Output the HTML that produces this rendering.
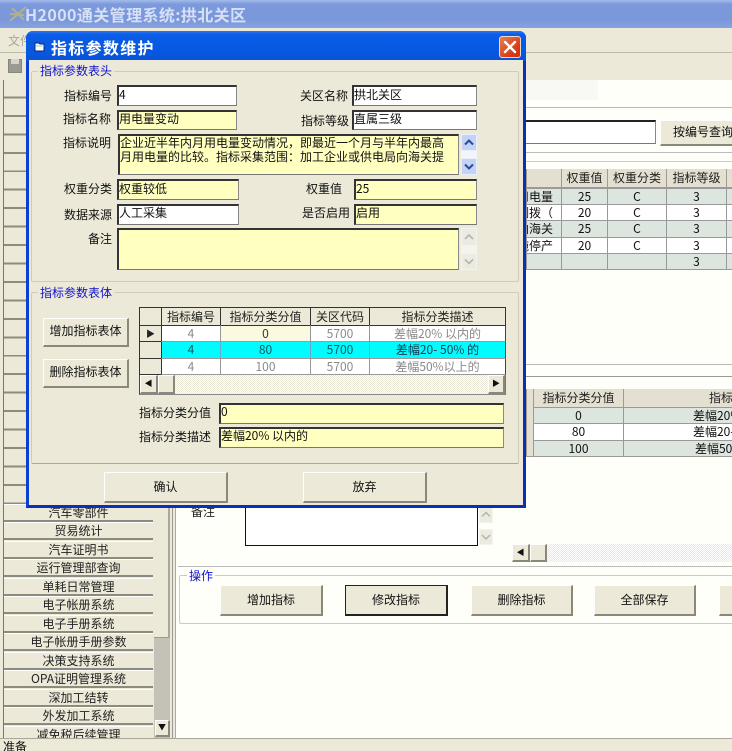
<!DOCTYPE html>
<html lang="zh"><head><meta charset="utf-8"><title>H2000</title>
<style>
html,body{margin:0;padding:0;background:#fffff9}
#p{position:relative;width:732px;height:751px;overflow:hidden;background:#fffff9;font:12px/16px "WenQuanYi Zen Hei","Noto Sans CJK SC",sans-serif;color:#111;filter:blur(.3px)}
#p div{position:absolute;box-sizing:border-box;white-space:nowrap}
#p svg{position:absolute}
.l{text-align:right}
.i{border:1px solid #222;border-right-color:#888;border-bottom-color:#777;border-top:2px solid #333;border-left:2px solid #333;background:#fff;padding:0;line-height:14px}
.y{background:#ffffc0}
.b{background:#ece9d8;border-right:2px solid #8a8878;border-bottom:2px solid #8a8878;border-top:1px solid #fff;border-left:1px solid #fff;text-align:center}
.g{border:1px solid #cfccbc;border-radius:2px}
.gt{color:#1111cc;background:#ece9d8;padding:0 2px;line-height:14px}
.s{left:4px;width:149px;height:18px;background:#ece9d8;border-bottom:2px solid #8d8b7d;border-top:1px solid #fff;text-align:center;line-height:15px;color:#222}
.c{text-align:center;line-height:16px;border:1px solid #999;overflow:hidden}
.h{background:#e3dfd1;border:1px solid #a09d8f;border-top:0;text-align:center;line-height:18px;color:#222}
.d{border:1px solid #333;background:#ece9d8;text-align:center;line-height:17px;color:#222}
.k{background:#dde5df}
.w{background:#fff}
.gr{color:#8a8a8a;background:#fff;border-color:#999}
.cy{background:#00fcff;color:#0c5a5c;border-color:#6ac}
.sb{background:#c3d3f5;border:1px solid #e8eefb}
.sg{background:#ecebe2;border:1px solid #f4f4ee}
.hatch{background:repeating-conic-gradient(#ece9d8 0 25%,#fff 0 50%) 0 0/2px 2px}
.cut{text-align:left;text-indent:-10px}
</style></head><body>
<div id="p">

<!-- main title -->
<div style="left:0;top:0;width:732px;height:28px;background:linear-gradient(#a3bcec 0,#7c99dc 15%,#7a97da 70%,#87a3e0 100%)"></div>
<svg style="left:9px;top:5px" width="18" height="18" viewBox="0 0 18 18"><path d="M1 16L17 2M3 3l12 12M1 9l14 1" stroke="#b3b18a" stroke-width="2" fill="none"/></svg>
<div style="left:25px;top:5px;font-size:16px;line-height:18px;font-weight:bold;color:#d6e0f6;letter-spacing:.4px">H2000通关管理系统:拱北关区</div>

<!-- menu / toolbar -->
<div style="left:0;top:28px;width:732px;height:52px;background:#ece9d8"></div>
<div style="left:0;top:52px;width:732px;height:1px;background:#bdbaaa"></div>
<div style="left:8px;top:33px;color:#aaa79a">文件</div>
<div style="left:8px;top:59px;width:14px;height:14px;background:#9a9a90;border:1px solid #86867c"></div>
<div style="left:11px;top:59px;width:8px;height:5px;background:#d4d4cc"></div>

<!-- sidebar -->
<div style="left:0;top:80px;width:176px;height:658px;background:#ece9d8"></div>
<div style="left:3px;top:80px;width:1px;height:658px;background:#777"></div>
<div style="left:4px;top:80px;width:149px;height:425px;background:repeating-linear-gradient(#ece9d8 0,#ece9d8 16.45px,#8d8b7d 16.45px,#8d8b7d 18.45px)"></div>
<div class="s" style="top:504px">汽车零部件</div>
<div class="s" style="top:522px">贸易统计</div>
<div class="s" style="top:541px">汽车证明书</div>
<div class="s" style="top:559px">运行管理部查询</div>
<div class="s" style="top:578px">单耗日常管理</div>
<div class="s" style="top:596px">电子帐册系统</div>
<div class="s" style="top:615px">电子手册系统</div>
<div class="s" style="top:633px">电子帐册手册参数</div>
<div class="s" style="top:652px">决策支持系统</div>
<div class="s" style="top:670px">OPA证明管理系统</div>
<div class="s" style="top:689px">深加工结转</div>
<div class="s" style="top:707px">外发加工系统</div>
<div class="s" style="top:726px;height:12px;overflow:hidden;border-bottom:0">减免税后续管理</div>
<div style="left:154px;top:80px;width:16px;height:558px;background:#ece9d8;border-right:2px solid #aaa89a;border-bottom:1px solid #999"></div>
<div style="left:154px;top:638px;width:16px;height:100px;background:#c4c2b6"></div>
<div class="b" style="left:155px;top:720px;width:15px;height:17px;font-size:8px;line-height:14px">▼</div>
<div style="left:172px;top:80px;width:1px;height:658px;background:#999"></div>
<div style="left:175px;top:80px;width:1px;height:658px;background:#aaa"></div>

<!-- top content -->
<div style="left:176px;top:107px;width:556px;height:1px;background:#bbb"></div>
<div style="left:526px;top:80px;width:72px;height:20px;background:#f8f8f4"></div>
<div class="i" style="left:400px;top:120px;width:256px;height:24px;border-top-color:#222"></div>
<div class="b" style="left:660px;top:120px;width:80px;height:26px;line-height:22px;text-align:left;padding-left:12px">按编号查询</div>
<div style="left:176px;top:152px;width:556px;height:1px;background:#bbb"></div>
<div style="left:176px;top:161px;width:556px;height:1px;background:#ccc"></div>

<!-- top grid -->
<div class="h" style="left:526px;top:169px;width:36px;height:19px"></div>
<div class="h" style="left:561px;top:169px;width:47px;height:19px">权重值</div>
<div class="h" style="left:607px;top:169px;width:60px;height:19px">权重分类</div>
<div class="h" style="left:666px;top:169px;width:61px;height:19px">指标等级</div>
<div class="h" style="left:726px;top:169px;width:20px;height:19px"></div>

<div class="c k cut" style="left:526px;top:188px;width:36px;height:17px">用电量</div>
<div class="c k" style="left:561px;top:188px;width:47px;height:17px">25</div>
<div class="c k" style="left:607px;top:188px;width:60px;height:17px">C</div>
<div class="c k" style="left:666px;top:188px;width:61px;height:17px">3</div>
<div class="c k" style="left:726px;top:188px;width:20px;height:17px"></div>

<div class="c w cut" style="left:526px;top:204px;width:36px;height:17px">调拨（</div>
<div class="c w" style="left:561px;top:204px;width:47px;height:17px">20</div>
<div class="c w" style="left:607px;top:204px;width:60px;height:17px">C</div>
<div class="c w" style="left:666px;top:204px;width:61px;height:17px">3</div>
<div class="c w" style="left:726px;top:204px;width:20px;height:17px"></div>

<div class="c k cut" style="left:526px;top:220px;width:36px;height:18px">向海关</div>
<div class="c k" style="left:561px;top:220px;width:47px;height:18px">25</div>
<div class="c k" style="left:607px;top:220px;width:60px;height:18px">C</div>
<div class="c k" style="left:666px;top:220px;width:61px;height:18px">3</div>
<div class="c k" style="left:726px;top:220px;width:20px;height:18px"></div>

<div class="c w cut" style="left:526px;top:237px;width:36px;height:17px">施停产</div>
<div class="c w" style="left:561px;top:237px;width:47px;height:17px">20</div>
<div class="c w" style="left:607px;top:237px;width:60px;height:17px">C</div>
<div class="c w" style="left:666px;top:237px;width:61px;height:17px">3</div>
<div class="c w" style="left:726px;top:237px;width:20px;height:17px"></div>

<div class="c k" style="left:526px;top:253px;width:36px;height:17px"></div>
<div class="c k" style="left:561px;top:253px;width:47px;height:17px"></div>
<div class="c k" style="left:607px;top:253px;width:60px;height:17px"></div>
<div class="c k" style="left:666px;top:253px;width:61px;height:17px">3</div>
<div class="c k" style="left:726px;top:253px;width:20px;height:17px"></div>

<!-- second grid -->
<div style="left:526px;top:364px;width:206px;height:1px;background:#bbb"></div>
<div style="left:526px;top:376px;width:206px;height:1px;background:#999"></div>
<div class="h" style="left:526px;top:389px;width:8px;height:19px"></div>
<div class="h" style="left:533px;top:389px;width:91px;height:19px">指标分类分值</div>
<div class="h" style="left:623px;top:389px;width:130px;height:19px;text-align:left;padding-left:85px">指标分类描述</div>
<div class="h" style="left:526px;top:407px;width:8px;height:50px"></div>
<div class="c k" style="left:533px;top:407px;width:91px;height:17px">0</div>
<div class="c k" style="left:623px;top:407px;width:130px;height:17px;text-align:left;padding-left:69px">差幅20%</div>
<div class="c w" style="left:533px;top:423px;width:91px;height:18px">80</div>
<div class="c w" style="left:623px;top:423px;width:130px;height:18px;text-align:left;padding-left:69px">差幅20-</div>
<div class="c k" style="left:533px;top:440px;width:91px;height:17px">100</div>
<div class="c k" style="left:623px;top:440px;width:130px;height:17px;text-align:left;padding-left:71px">差幅50</div>

<!-- lower form -->
<div style="left:191px;top:504px;color:#222">备注</div>
<div style="left:245px;top:500px;width:233px;height:46px;background:#fff;border-left:1px solid #111;border-right:1px solid #111;border-bottom:1px solid #111"></div>
<div class="sg" style="left:479px;top:507px;width:14px;height:16px"></div>
<svg style="left:479px;top:507px" width="14" height="16"><path d="M3 9.5l4-4 4 4" stroke="#b5b5aa" stroke-width="1.5" fill="none"/></svg>
<div class="sg" style="left:479px;top:529px;width:14px;height:16px"></div>
<svg style="left:479px;top:529px" width="14" height="16"><path d="M3 6l4 4 4-4" stroke="#b5b5aa" stroke-width="1.5" fill="none"/></svg>
<div class="hatch" style="left:512px;top:544px;width:220px;height:18px"></div>
<div class="b" style="left:512px;top:544px;width:18px;height:18px;font-size:8px;line-height:15px">◀</div>
<div class="b" style="left:530px;top:544px;width:17px;height:18px"></div>
<div style="left:178px;top:566px;width:554px;height:1px;background:#bbb"></div>
<div class="g" style="left:179px;top:575px;width:560px;height:49px"></div>
<div style="left:187px;top:568px;color:#1111cc;background:#fffff9;padding:0 2px">操作</div>
<div class="b" style="left:220px;top:585px;width:103px;height:31px;line-height:27px">增加指标</div>
<div class="b" style="left:345px;top:585px;width:103px;height:31px;line-height:27px;border:1px solid #222;border-right:2px solid #222;border-bottom:2px solid #222">修改指标</div>
<div class="b" style="left:471px;top:585px;width:102px;height:31px;line-height:27px">删除指标</div>
<div class="b" style="left:594px;top:585px;width:102px;height:31px;line-height:27px">全部保存</div>
<div class="b" style="left:719px;top:585px;width:40px;height:31px"></div>

<!-- status -->
<div style="left:0;top:738px;width:732px;height:13px;background:#ece9d8;border-top:1px solid #aaa89a"></div>
<div style="left:3px;top:739px">准备</div>

<!-- dialog -->
<div style="left:26px;top:31px;width:500px;height:477px;background:#0a3bd6;border-radius:7px 7px 0 0;border:3px solid #0a3fd0;border-top:0;border-bottom-color:#0a2fb8;border-right-color:#0a30b4"></div>
<div style="left:26px;top:31px;width:500px;height:30px;border-radius:7px 7px 0 0;background:linear-gradient(#2f74ee 0,#0a5ce6 12%,#0658e0 70%,#0a52d4 100%)"></div>
<div style="left:29px;top:60px;width:494px;height:445px;background:#ece9d8"></div>
<svg style="left:34px;top:41px" width="12" height="12" viewBox="0 0 12 12"><path d="M1 2h4l1 1h4v7H1z" fill="#fff" stroke="#0b2a70"/><path d="M2 5h8" stroke="#9cb"/></svg>
<div style="left:51px;top:37px;font-size:16px;line-height:20px;font-weight:bold;color:#fff;letter-spacing:1.3px">指标参数维护</div>
<div style="left:499px;top:36px;width:22px;height:22px;border:1px solid #f0d8d0;border-radius:3px;background:linear-gradient(135deg,#e88050,#d83c14 70%,#c83008)"></div>
<svg style="left:499px;top:36px" width="22" height="22" viewBox="0 0 22 22"><path d="M6 6L16 16M16 6L6 16" stroke="#fff" stroke-width="2.4" stroke-linecap="round"/></svg>

<!-- group 1 -->
<div class="g" style="left:31px;top:71px;width:488px;height:211px"></div>
<div class="gt" style="left:38px;top:64px">指标参数表头</div>
<div class="l" style="left:40px;top:88px;width:72px">指标编号</div>
<div class="i" style="left:117px;top:85px;width:120px;height:21px;padding-top:1px">4</div>
<div class="l" style="left:40px;top:111px;width:71px">指标名称</div>
<div class="i y" style="left:117px;top:110px;width:120px;height:20px">用电量变动</div>
<div class="l" style="left:40px;top:135px;width:71px">指标说明</div>
<div class="i y" style="left:118px;top:134px;width:341px;height:41px;line-height:14px;padding-top:0">企业近半年内月用电量变动情况，即最近一个月与半年内最高<br>月用电量的比较。指标采集范围：加工企业或供电局向海关提</div>
<div class="sb" style="left:461px;top:134px;width:16px;height:17px"></div>
<svg style="left:461px;top:134px" width="16" height="17"><path d="M4 10.5l4-4 4 4" stroke="#2a4a9a" stroke-width="2" fill="none"/></svg>
<div style="left:461px;top:151px;width:16px;height:8px;background:#f4f5fb"></div>
<div class="sb" style="left:461px;top:158px;width:16px;height:17px"></div>
<svg style="left:461px;top:158px" width="16" height="17"><path d="M4 6.5l4 4 4-4" stroke="#2a4a9a" stroke-width="2" fill="none"/></svg>
<div class="l" style="left:40px;top:181px;width:72px">权重分类</div>
<div class="i y" style="left:117px;top:179px;width:122px;height:21px;padding-top:1px">权重较低</div>
<div class="l" style="left:40px;top:207px;width:72px">数据来源</div>
<div class="i" style="left:117px;top:204px;width:122px;height:21px">人工采集</div>
<div class="l" style="left:60px;top:231px;width:52px">备注</div>
<div class="i y" style="left:117px;top:228px;width:342px;height:42px"></div>
<div class="sg" style="left:461px;top:228px;width:16px;height:18px"></div>
<svg style="left:461px;top:228px" width="16" height="18"><path d="M4 11l4-4 4 4" stroke="#b5b5aa" stroke-width="1.6" fill="none"/></svg>
<div style="left:461px;top:246px;width:16px;height:7px;background:#f4f3ec"></div>
<div class="sg" style="left:461px;top:253px;width:16px;height:17px"></div>
<svg style="left:461px;top:253px" width="16" height="17"><path d="M4 6.5l4 4 4-4" stroke="#b5b5aa" stroke-width="1.6" fill="none"/></svg>

<div class="l" style="left:290px;top:88px;width:58px">关区名称</div>
<div class="i" style="left:352px;top:85px;width:125px;height:21px;padding-top:1px">拱北关区</div>
<div class="l" style="left:290px;top:113px;width:59px">指标等级</div>
<div class="i" style="left:352px;top:110px;width:125px;height:20px">直属三级</div>
<div class="l" style="left:290px;top:181px;width:52px">权重值</div>
<div class="i y" style="left:354px;top:179px;width:123px;height:21px;padding-top:1px">25</div>
<div class="l" style="left:290px;top:205px;width:60px">是否启用</div>
<div class="i y" style="left:354px;top:204px;width:123px;height:21px">启用</div>

<!-- group 2 -->
<div class="g" style="left:31px;top:292px;width:488px;height:172px;border-bottom-color:#aaa89a"></div>
<div class="gt" style="left:38px;top:286px">指标参数表体</div>
<div class="b" style="left:43px;top:318px;width:86px;height:29px;line-height:24px">增加指标表体</div>
<div class="b" style="left:43px;top:359px;width:86px;height:29px;line-height:24px">删除指标表体</div>

<div style="left:139px;top:307px;width:367px;height:88px;background:#ece9d8;border:1px solid #444;border-bottom:1px solid #888;border-right:1px solid #777"></div>
<div class="d" style="left:139px;top:307px;width:23px;height:19px"></div>
<div class="d" style="left:161px;top:307px;width:60px;height:19px">指标编号</div>
<div class="d" style="left:220px;top:307px;width:91px;height:19px">指标分类分值</div>
<div class="d" style="left:310px;top:307px;width:60px;height:19px">关区代码</div>
<div class="d" style="left:369px;top:307px;width:137px;height:19px">指标分类描述</div>
<div class="d" style="left:139px;top:325px;width:23px;height:17px;font-size:9px;line-height:15px">▶</div>
<div class="d" style="left:139px;top:341px;width:23px;height:18px"></div>
<div class="d" style="left:139px;top:358px;width:23px;height:17px"></div>

<div class="c gr" style="left:161px;top:325px;width:60px;height:17px;border-left-color:#333;border-top-color:#333">4</div>
<div class="c gr" style="left:220px;top:325px;width:91px;height:17px;background:#fbf9e0;color:#333;border-top-color:#333">0</div>
<div class="c gr" style="left:310px;top:325px;width:60px;height:17px;border-top-color:#333">5700</div>
<div class="c gr" style="left:369px;top:325px;width:137px;height:17px;border-top-color:#333;border-right-color:#444">差幅20% 以内的</div>
<div class="c cy" style="left:161px;top:341px;width:60px;height:18px;border-left-color:#333">4</div>
<div class="c cy" style="left:220px;top:341px;width:91px;height:18px">80</div>
<div class="c cy" style="left:310px;top:341px;width:60px;height:18px">5700</div>
<div class="c cy" style="left:369px;top:341px;width:137px;height:18px;color:#153a50;border-right-color:#444">差幅20- 50% 的</div>
<div class="c gr" style="left:161px;top:358px;width:60px;height:17px;border-left-color:#333">4</div>
<div class="c gr" style="left:220px;top:358px;width:91px;height:17px">100</div>
<div class="c gr" style="left:310px;top:358px;width:60px;height:17px">5700</div>
<div class="c gr" style="left:369px;top:358px;width:137px;height:17px;border-right-color:#444">差幅50%以上的</div>

<div class="hatch" style="left:140px;top:375px;width:365px;height:19px"></div>
<div class="b" style="left:140px;top:375px;width:18px;height:19px;font-size:8px;line-height:16px">◀</div>
<div class="b" style="left:158px;top:375px;width:17px;height:19px"></div>
<div class="b" style="left:488px;top:375px;width:17px;height:19px;font-size:8px;line-height:16px">▶</div>

<div class="l" style="left:130px;top:405px;width:81px">指标分类分值</div>
<div class="i y" style="left:219px;top:403px;width:285px;height:21px">0</div>
<div class="l" style="left:130px;top:429px;width:81px">指标分类描述</div>
<div class="i y" style="left:219px;top:427px;width:285px;height:21px">差幅20% 以内的</div>

<div class="b" style="left:104px;top:472px;width:124px;height:31px;line-height:27px">确认</div>
<div class="b" style="left:303px;top:472px;width:124px;height:31px;line-height:27px">放弃</div>

</div>
</body></html>
